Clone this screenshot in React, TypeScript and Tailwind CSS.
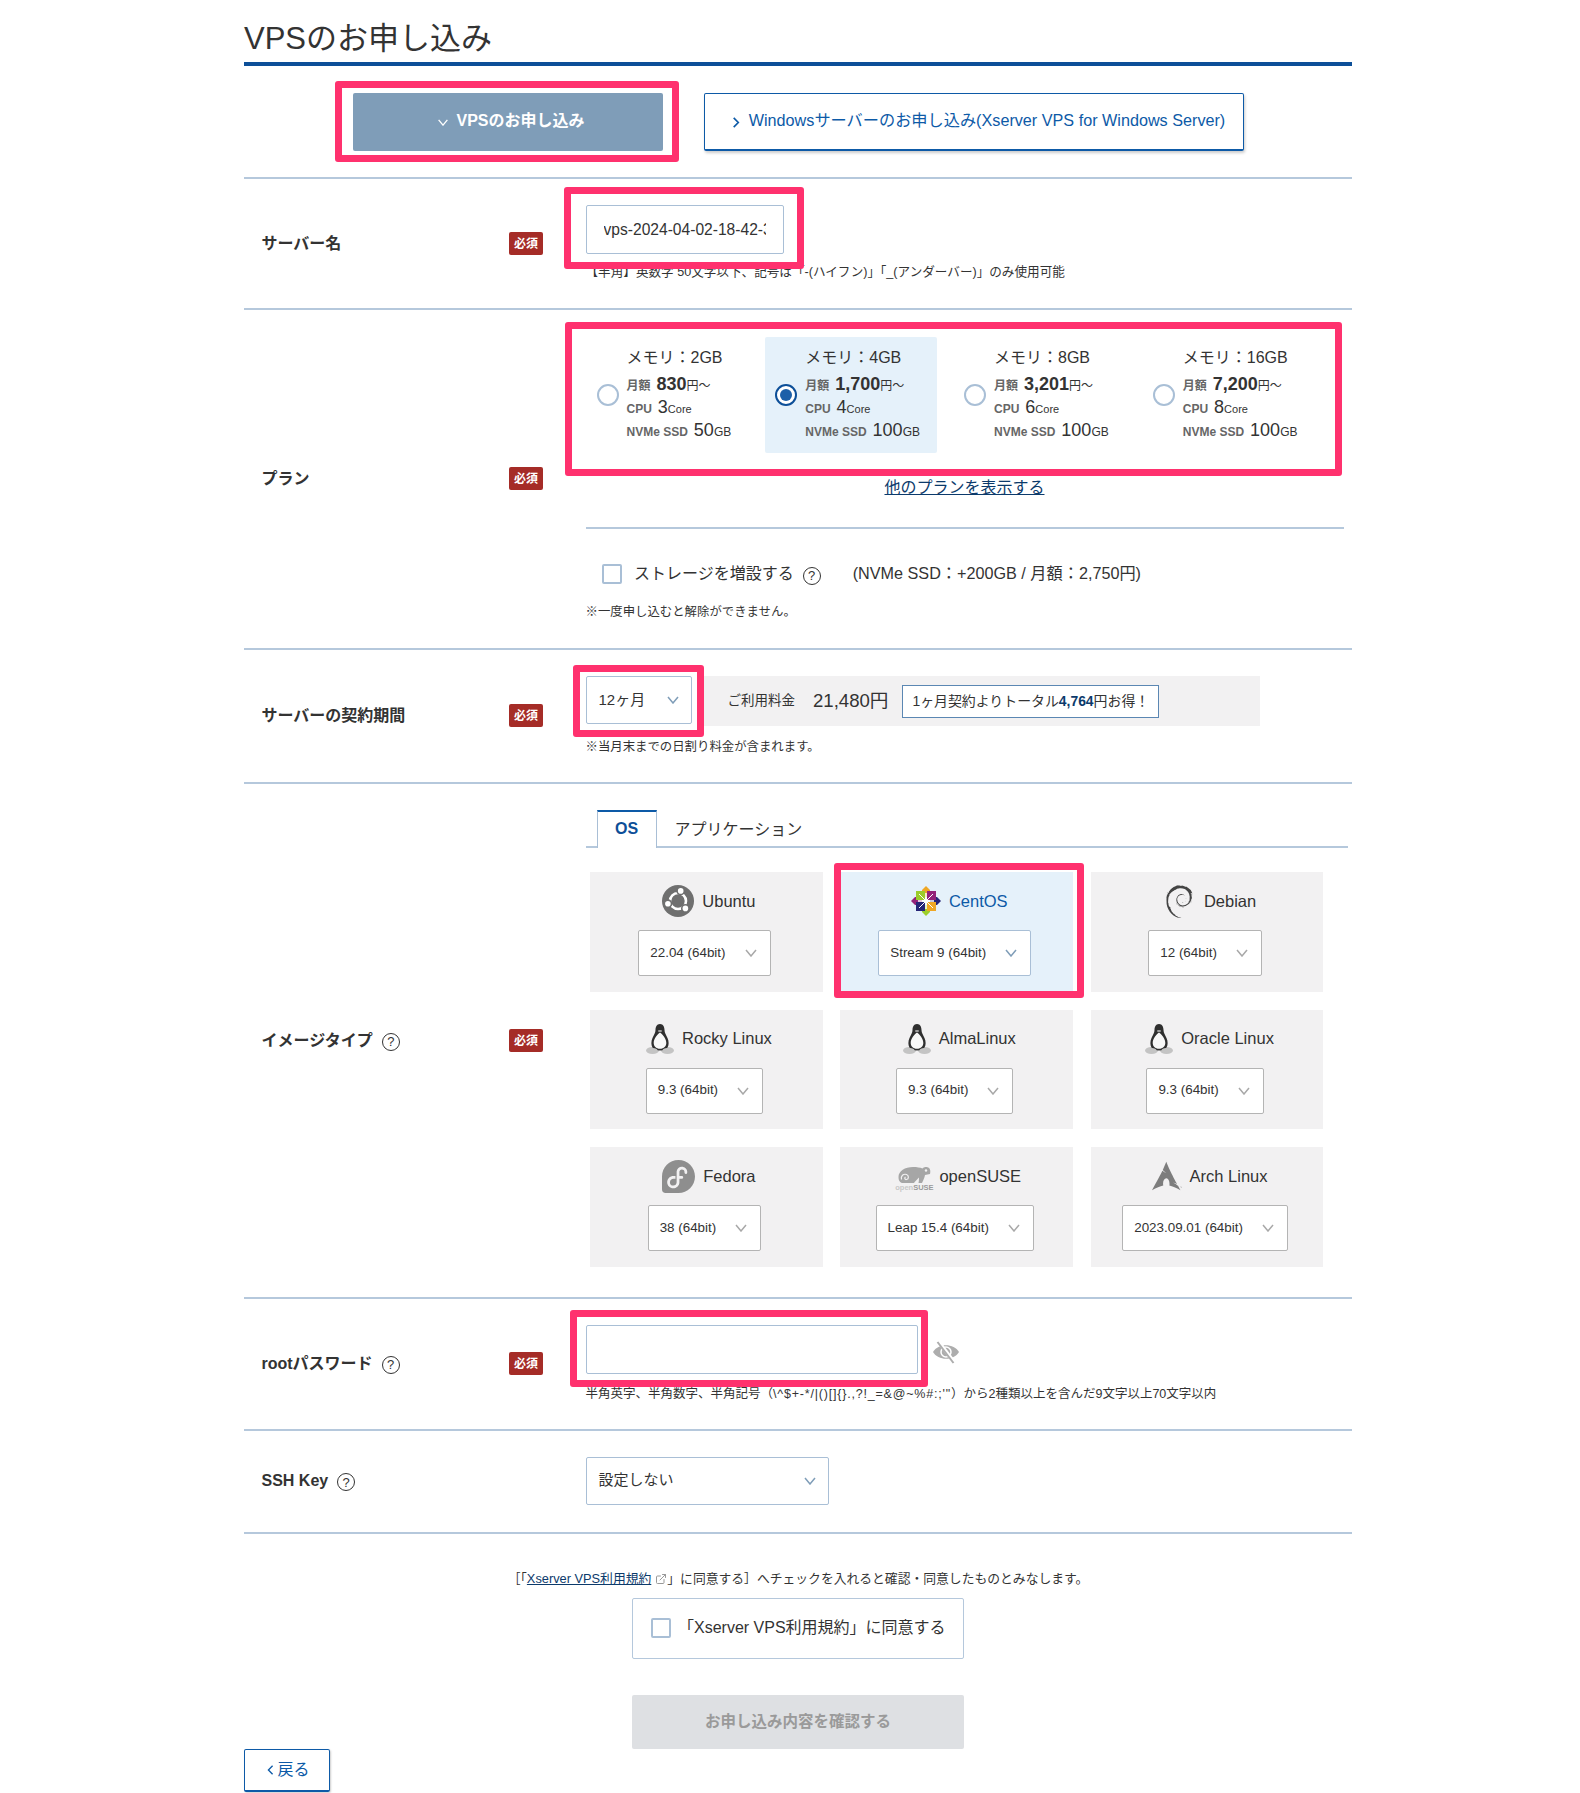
import type { ReactNode } from "react";
import { ExternalLink } from "lucide-react";
import { SiArchlinux, SiDebian, SiFedora } from "react-icons/si";

function Chevron({ className }: { className: string }) {
  return (
    <svg viewBox="0 0 12 8" fill="none" stroke="currentColor" strokeWidth="1.5" className={className}>
      <path d="M1 1l5 6 5-6" />
    </svg>
  );
}

function Frame({ className }: { className: string }) {
  return <div className={"pointer-events-none absolute rounded-[3px] border-[7px] border-[#ff316e] " + className} />;
}

function Required() {
  return (
    <span className="flex h-[23px] w-[34px] items-center justify-center rounded-[2px] bg-[#a52c27] text-[12px] font-bold text-white">
      必須
    </span>
  );
}

function Help({ className = "" }: { className?: string }) {
  return (
    <span
      className={
        "flex h-[18px] w-[18px] shrink-0 items-center justify-center rounded-full border-[1.5px] border-[#333] text-[13px] font-normal leading-none " +
        className
      }
    >
      ?
    </span>
  );
}

function Row({ label, help, required, children }: { label: string; help?: boolean; required?: boolean; children: ReactNode }) {
  return (
    <div className="grid grid-cols-[265px_76.5px_1fr] items-center border-t-2 border-[#b5c8dc]">
      <div className="flex items-center gap-[9px] pl-[17.500px] text-[16px] font-bold">
        {label}
        {help && <Help className="mt-[2px]" />}
      </div>
      <div>{required && <Required />}</div>
      <div>{children}</div>
    </div>
  );
}

function Penguin() {
  return (
    <svg viewBox="0 0 28 32" className="h-[32px] w-[28px]">
      <ellipse cx="6.500" cy="27.500" rx="6.500" ry="3.500" fill="#c4c4c4" />
      <ellipse cx="21.500" cy="27.500" rx="6.500" ry="3.500" fill="#c4c4c4" />
      <path d="M14 1c-3.500 0-4.500 3.500-4.500 6 0 3-1.500 4.500-3 8-1.500 3.500-1.500 7 0 9.500C8 26.500 10 27.500 14 27.500s6-1 7.500-3c1.500-2.500 1.500-6 0-9.500-1.500-3.500-3-5-3-8 0-2.500-1-6-4.500-6z" fill="#2f2f2f" />
      <path d="M14 9.500c-2.500 2-6.300 6-6.300 10.500 0 3 2.300 5.800 6.300 5.800s6.300-2.800 6.300-5.800c0-4.500-3.800-8.500-6.300-10.500z" fill="#f8f8f8" />
      <ellipse cx="14" cy="8" rx="2.200" ry="1" fill="#a5a5a5" />
      <ellipse cx="6.500" cy="27.500" rx="5" ry="2.500" fill="#c4c4c4" />
      <ellipse cx="21.500" cy="27.500" rx="5" ry="2.500" fill="#c4c4c4" />
    </svg>
  );
}

function UbuntuLogo() {
  return (
    <svg viewBox="0 0 32 32" className="h-[32px] w-[32px]">
      <circle cx="16" cy="16" r="16" fill="#6f6f6f" />
      <circle cx="16" cy="16" r="8" fill="none" stroke="#fff" strokeWidth="2.600" />
      <circle cx="18.700" cy="5.900" r="4.400" fill="#6f6f6f" />
      <circle cx="5.900" cy="18.700" r="4.400" fill="#6f6f6f" />
      <circle cx="23.400" cy="23.400" r="4.400" fill="#6f6f6f" />
      <circle cx="18.700" cy="5.900" r="2.800" fill="#fff" />
      <circle cx="5.900" cy="18.700" r="2.800" fill="#fff" />
      <circle cx="23.400" cy="23.400" r="2.800" fill="#fff" />
    </svg>
  );
}

function CentOSLogo() {
  return (
    <svg viewBox="0 0 30 30" className="h-[30px] w-[30px]">
      <path d="M15 0l4 4v7h-8V4z" fill="#efa724" />
      <path d="M30 15l-4 4h-7v-8h7z" fill="#262577" />
      <path d="M15 30l-4-4v-7h8v7z" fill="#9ccd2a" />
      <path d="M0 15l4-4h7v8H4z" fill="#932279" />
      <rect x="5" y="5" width="9" height="9" fill="#9ccd2a" />
      <rect x="16" y="5" width="9" height="9" fill="#932279" />
      <rect x="16" y="16" width="9" height="9" fill="#efa724" />
      <rect x="5" y="16" width="9" height="9" fill="#262577" />
      <path d="M15 7v16M7 15h16" stroke="#fff" strokeWidth="1.500" />
      <path d="M8 8l14 14M22 8L8 22" stroke="#fff" strokeWidth="1" />
    </svg>
  );
}

function OpenSuseLogo() {
  return (
    <span className="flex w-[34px] flex-col items-center pt-[4px]">
      <svg viewBox="0 0 34 18" className="h-[18px] w-[34px]">
        <path
          d="M1.500 11C1.500 5 8 1 16 1c4 0 7 .5 9.500 1.500C27 .5 31 .5 32.500 2.500c1 1.500 1 3.500.5 5.500l-5 1c-.5 2.500-1.500 5-3 8h-3.500c.5-2 .5-4 .5-5.500-2 2-4 4-5 5.500h-11C3 17 1.500 14.500 1.500 11z"
          fill="#a6a6a6"
        />
        <path d="M4.500 13.500c-1-3.500 2-6 5-5 2.500 1 2.500 4.500 0 5-1.500.3-2.500-1.500-1-2.500" fill="none" stroke="#f2f1f2" strokeWidth="1.200" />
        <circle cx="29" cy="4.500" r="1.200" fill="#f2f1f2" />
      </svg>
      <span className="text-[7.500px] font-bold leading-[7px] text-[#9a9a9a]">
        <span className="text-[#c8c8c8]">open</span>SUSE
      </span>
    </span>
  );
}

function EyeSlash() {
  return (
    <svg viewBox="0 0 28 24" className="mt-[6px] h-[24px] w-[28px]">
      <path d="M1 12C6 3 22 3 27 12 22 21 6 21 1 12z" fill="#adadad" />
      <circle cx="14" cy="12" r="5" fill="none" stroke="#fff" strokeWidth="1.500" />
      <path d="M6.500 1.500l16 21" stroke="#fff" strokeWidth="3.600" />
      <path d="M5.500 2l16 21" stroke="#adadad" strokeWidth="2" />
    </svg>
  );
}

function OsCard({ name, logo, version, active }: { name: string; logo: ReactNode; version: string; active?: boolean }) {
  return (
    <div className={"flex h-[119.5px] flex-col items-center " + (active ? "bg-[#e5f1fa]" : "bg-[#f2f1f2]")}>
      <div className={"mt-[13px] flex h-[32px] items-center gap-[8px] pl-[5px] text-[16.500px] " + (active ? "text-[#0d5aa7]" : "")}>
        {logo}
        {name}
      </div>
      <div
        className={
          "mr-[4px] mt-[13px] flex h-[46px] items-center gap-[19px] rounded-[2px] border-[1.5px] bg-white pl-[11px] pr-[13px] text-[13.4px] " +
          (active ? "border-[#a9bfd6]" : "border-[#b4b4b4]")
        }
      >
        {version}
        <Chevron className={"h-[8px] w-[12px] " + (active ? "text-[#7f9db8]" : "text-[#a8a8a8]")} />
      </div>
    </div>
  );
}

const plans = [
  { memory: "2GB", price: "830", cpu: "3", ssd: "50" },
  { memory: "4GB", price: "1,700", cpu: "4", ssd: "100", active: true },
  { memory: "8GB", price: "3,201", cpu: "6", ssd: "100" },
  { memory: "16GB", price: "7,200", cpu: "8", ssd: "100" },
];

function PlanCard({ memory, price, cpu, ssd, active }: { memory: string; price: string; cpu: string; ssd: string; active?: boolean }) {
  return (
    <div className={"flex h-[116px] items-center gap-[8px] rounded-[2px] pl-[10px] pr-[17px] " + (active ? "bg-[#e5f1fa]" : "")}>
      <span
        className={
          "flex h-[22px] w-[22px] items-center justify-center rounded-full border-2 bg-white " +
          (active ? "border-[#0d4f98]" : "border-[#a9bfd6]")
        }
      >
        {active && <span className="h-[12px] w-[12px] rounded-full bg-[#1b5fa8]" />}
      </span>
      <div className="pb-[2px]">
        <div className="mb-[3px] text-[16px] leading-[24px]">メモリ：{memory}</div>
        <div className="flex h-[23px] items-baseline gap-[6px] leading-[23px]">
          <span className="text-[12px] font-bold text-[#666]">月額</span>
          <span className="text-[18px] font-bold">
            {price}
            <span className="text-[12px] font-normal">円～</span>
          </span>
        </div>
        <div className="flex h-[23px] items-baseline gap-[6px] leading-[23px]">
          <span className="text-[12px] font-bold text-[#666]">CPU</span>
          <span className="text-[18px]">
            {cpu}
            <span className="text-[11px]">Core</span>
          </span>
        </div>
        <div className="flex h-[23px] items-baseline gap-[6px] leading-[23px]">
          <span className="text-[12px] font-bold text-[#666]">NVMe SSD</span>
          <span className="text-[18px]">
            {ssd}
            <span className="text-[12px]">GB</span>
          </span>
        </div>
      </div>
    </div>
  );
}

function Checkbox() {
  return <span className="h-[20px] w-[20px] shrink-0 rounded-[2px] border-2 border-[#a9bfd6] bg-white" />;
}

export default function App() {
  const penguin = <Penguin />;
  return (
    <div className="min-h-[1793px] bg-white [font-family:'Liberation_Sans','Noto_Sans_CJK_JP',sans-serif] text-[#333]">
      <div className="ml-[244px] w-[1108px]">
        <h1 className="flex h-[66px] items-center border-b-4 border-[#0d4f98] pt-[17px] text-[31px] font-normal">VPSのお申し込み</h1>

        <div className="flex h-[111px] items-start gap-[41px] pl-[109px] pt-[27px]">
          <div className="relative">
            <button className="flex h-[58px] w-[310px] items-center justify-center gap-[7px] rounded-[2px] bg-[#7f9db8] pb-[2px] pl-[6px] text-[16px] font-bold text-white">
              <Chevron className="mt-[3px] h-[7px] w-[12px]" />
              VPSのお申し込み
            </button>
            <Frame className="-bottom-[11px] -left-[18px] -right-[16px] -top-[12px]" />
          </div>
          <button className="flex h-[58px] w-[540px] items-center justify-center gap-[9px] rounded-[2px] border border-b-2 border-[#0d5aa7] pb-[2px] pl-[9px] text-[16.200px] text-[#0d5aa7] shadow-[1px_2px_3px_rgba(0,0,0,0.2)]">
            <svg viewBox="0 0 8 12" fill="none" stroke="currentColor" strokeWidth="1.800" className="mt-[3px] h-[11px] w-[8px]">
              <path d="M1.500 1l5 5-5 5" />
            </svg>
            Windowsサーバーのお申し込み(Xserver VPS for Windows Server)
          </button>
        </div>

        <Row label="サーバー名" required>
          <div className="pb-[27px] pt-[26px]">
            <div className="relative w-[198px]">
              <div className="flex h-[49px] items-center rounded-[2px] border-[1.5px] border-[#a9bfd6] px-[17px] text-[15.600px]">
                <span className="overflow-hidden whitespace-nowrap">vps-2024-04-02-18-42-32</span>
              </div>
              <Frame className="-bottom-[15px] -left-[22px] -right-[20.500px] -top-[18px]" />
            </div>
            <p className="mt-[9px] text-[12.600px] leading-[18px]">【半角】英数字 50文字以下、記号は「-(ハイフン)」「_(アンダーバー)」のみ使用可能</p>
          </div>
        </Row>

        <Row label="プラン" required>
          <div className="pb-[27px] pt-[27px]">
            <div className="relative">
              <div className="flex gap-[17px] pl-[1px]">
                {plans.map((plan) => (
                  <PlanCard key={plan.memory} {...plan} />
                ))}
              </div>
              <Frame className="-bottom-[23px] -left-[20.500px] -top-[15px] right-[10px]" />
            </div>
            <div className="mt-[23px] text-center text-[16px] leading-[24px]">
              <a className="pr-[8.500px] text-[#0c3a6b] underline">他のプランを表示する</a>
            </div>
            <div className="mr-[8px] mt-[26.500px] border-t-2 border-[#b5c8dc]" />
            <div className="mt-[33px] flex h-[24px] items-center pl-[16.500px] text-[16px]">
              <Checkbox />
              <span className="ml-[12px]">ストレージを増設する</span>
              <Help className="ml-[9px] mt-[4px]" />
              <span className="ml-[32px] text-[16.200px]">(NVMe SSD：+200GB / 月額：2,750円)</span>
            </div>
            <p className="mt-[17px] text-[12.400px] leading-[18px]">※一度申し込むと解除ができません。</p>
          </div>
        </Row>

        <Row label="サーバーの契約期間" required>
          <div className="pb-[26px] pt-[26.500px]">
            <div className="flex items-start">
              <div className="relative w-[106px]">
                <div className="flex h-[48px] items-center justify-between rounded-[2px] border-[1.5px] border-[#a9bfd6] pl-[12px] pr-[12px] text-[15px]">
                  12ヶ月
                  <Chevron className="h-[8px] w-[12px] text-[#7f9db8]" />
                </div>
                <Frame className="-bottom-[12.700px] -left-[13px] -right-[12.500px] -top-[11px]" />
              </div>
              <div className="ml-[8px] flex h-[50px] w-[560px] items-center bg-[#f2f1f2] pl-[28px]">
                <span className="text-[13.500px]">ご利用料金</span>
                <span className="ml-[18px] text-[18.600px]">21,480円</span>
                <span className="ml-[14px] flex h-[33px] items-center border-[1.5px] border-[#5b87b3] bg-white px-[9px] text-[13.900px]">
                  1ヶ月契約よりトータル<b className="text-[#0c3a6b]">4,764</b>円お得！
                </span>
              </div>
            </div>
            <p className="mt-[12px] text-[12.400px] leading-[18px]">※当月末までの日割り料金が含まれます。</p>
          </div>
        </Row>

        <Row label="イメージタイプ" help required>
          <div className="pb-[30.500px] pt-[25.500px]">
            <div className="mr-[4px] flex h-[38px] items-end border-b-2 border-[#b5c8dc] pl-[11px]">
              <div className="-mb-[2px] flex h-[38px] w-[60px] items-center justify-center border-x-[1.5px] border-t-2 border-x-[#a9bfd6] border-t-[#0d5aa7] bg-white pb-[2px] text-[16px] font-bold text-[#0d4f98]">
                OS
              </div>
              <div className="ml-[18px] self-center pt-[4px] text-[16px]">アプリケーション</div>
            </div>
            <div className="ml-[4.500px] mt-[24.500px] grid w-[733.500px] grid-cols-3 gap-x-[17.500px] gap-y-[18px]">
              <OsCard name="Ubuntu" version="22.04 (64bit)" logo={<UbuntuLogo />} />
              <div className="relative">
                <OsCard name="CentOS" version="Stream 9 (64bit)" logo={<CentOSLogo />} active />
                <Frame className="-bottom-[6px] -left-[6.500px] -right-[10.500px] -top-[9.300px]" />
              </div>
              <OsCard name="Debian" version="12 (64bit)" logo={<SiDebian size={33} className="text-[#444]" />} />
              <OsCard name="Rocky Linux" version="9.3 (64bit)" logo={penguin} />
              <OsCard name="AlmaLinux" version="9.3 (64bit)" logo={penguin} />
              <OsCard name="Oracle Linux" version="9.3 (64bit)" logo={penguin} />
              <OsCard name="Fedora" version="38 (64bit)" logo={<SiFedora size={33} className="text-[#8e8e8e]" />} />
              <OsCard name="openSUSE" version="Leap 15.4 (64bit)" logo={<OpenSuseLogo />} />
              <OsCard name="Arch Linux" version="2023.09.01 (64bit)" logo={<SiArchlinux size={30} className="text-[#7d7d7d]" />} />
            </div>
          </div>
        </Row>

        <Row label="rootパスワード" help required>
          <div className="pb-[26px] pt-[26px]">
            <div className="flex items-center gap-[14px]">
              <div className="relative w-[332.500px]">
                <div className="h-[48.500px] rounded-[2px] border-[1.5px] border-[#a9bfd6]" />
                <Frame className="-bottom-[13px] -left-[16px] -right-[9.500px] -top-[14.700px]" />
              </div>
              <EyeSlash />
            </div>
            <p className="mt-[11px] text-[12.500px] leading-[18px]">
              半角英字、半角数字、半角記号（<span className="tracking-[0.8px]">\^$+-*/|()[]{"{}"}.,?!_=&@~%#:;'"</span>）から2種類以上を含んだ9文字以上70文字以内
            </p>
          </div>
        </Row>

        <Row label="SSH Key" help>
          <div className="pb-[27px] pt-[26px]">
            <div className="flex h-[48px] w-[243px] items-center justify-between rounded-[2px] border-[1.5px] border-[#a9bfd6] pl-[12px] pr-[12px] text-[15px]">
              設定しない
              <Chevron className="h-[8px] w-[12px] text-[#7f9db8]" />
            </div>
          </div>
        </Row>

        <div className="flex flex-col items-center border-t-2 border-[#b5c8dc] pt-[36px]">
          <p className="flex items-center text-[12.800px] leading-[18px]">
            ［「<a className="text-[#0c3a6b] underline">Xserver VPS利用規約</a>
            <ExternalLink size={12} className="ml-[4px] text-[#999]" />」に同意する］へチェックを入れると確認・同意したものとみなします。
          </p>
          <div className="mt-[10px] flex h-[61px] w-[332px] items-center gap-[7px] rounded-[2px] border-[1.5px] border-[#b5c8dc] pl-[18px] text-[16px]">
            <Checkbox />
            「Xserver VPS利用規約」に同意する
          </div>
          <button className="mt-[36px] h-[54px] w-[332px] rounded-[2px] bg-[#dee0e3] text-[15.500px] font-bold text-[#9a9a9a]">
            お申し込み内容を確認する
          </button>
          <button className="flex h-[43px] w-[86px] items-center justify-center gap-[3px] self-start rounded-[2px] border-[1.5px] border-b-2 border-[#0d5aa7] pl-[3px] text-[16px] text-[#0d5aa7] shadow-[1px_1px_2px_rgba(0,0,0,0.2)]">
            <svg viewBox="0 0 8 12" fill="none" stroke="currentColor" strokeWidth="1.600" className="h-[10px] w-[7px]">
              <path d="M6.500 1l-5 5 5 5" />
            </svg>
            戻る
          </button>
        </div>
      </div>
    </div>
  );
}
